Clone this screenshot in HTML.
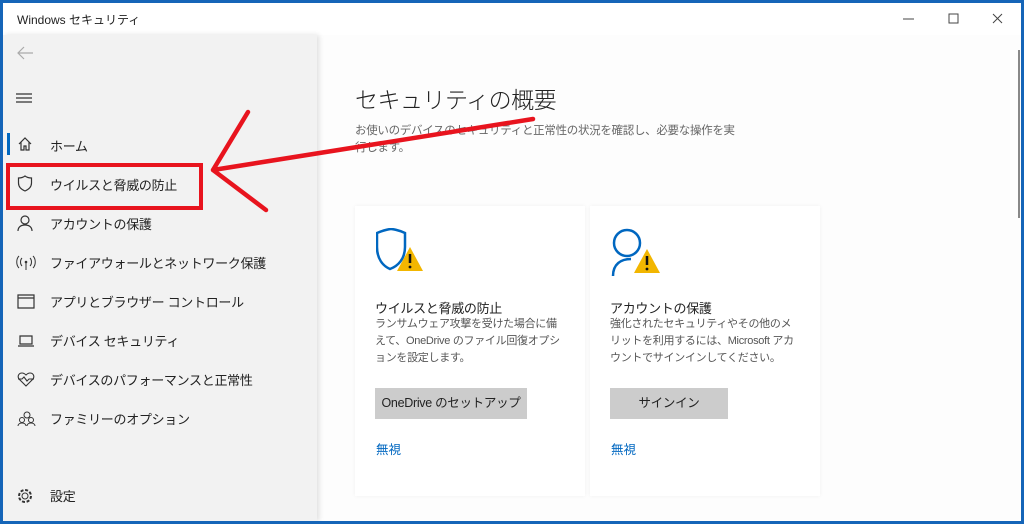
<!DOCTYPE html>
<html><head><meta charset="utf-8"><style>
*{margin:0;padding:0;box-sizing:border-box}
body{width:1024px;height:524px;overflow:hidden;background:#1565b8;font-family:"Liberation Sans","Noto Sans CJK JP",sans-serif;position:relative}
.win{position:absolute;left:3px;top:3px;width:1018px;height:518px;background:#fdfdfd;overflow:hidden}
.title{position:absolute;left:0;top:0;width:100%;height:32px;background:#fff;font-size:12px;color:#222}
.title span{position:absolute;left:14px;top:8px}
.side{position:absolute;left:0;top:32px;width:314px;height:486px;background:#f2f2f2;box-shadow:2px 0 5px rgba(0,0,0,.12)}
.nav{position:absolute;left:47px;font-size:13px;color:#222;letter-spacing:-.3px}
.ic{position:absolute;left:12px}
.t{position:absolute;color:#222}
.card{position:absolute;top:203px;width:230px;height:290px;background:#fff;box-shadow:0 0 4px rgba(0,0,0,.05)}
.ct{position:absolute;left:20px;font-size:13px;color:#222;letter-spacing:-.3px}
.cd{position:absolute;left:20px;top:110px;font-size:11px;line-height:17px;color:#555;width:190px;letter-spacing:-.3px}
.btn{position:absolute;left:20px;top:182px;height:31px;background:#ccc;font-size:12.5px;color:#222;text-align:center;line-height:31px;letter-spacing:-.3px}
.lk{position:absolute;left:21px;top:233px;font-size:12.5px;color:#0067c0}
</style></head><body>
<div class="win">
<div class="title"><span>Windows セキュリティ</span>
<svg style="position:absolute;left:880px;top:6px" width="130" height="20"><path d="M20 10h11" stroke="#444"/><path d="M66 5h9v9h-9z" stroke="#444" fill="none"/><path d="M110 5l9 9M119 5l-9 9" stroke="#444"/></svg></div>
<div class="side">
<svg class="ic" style="top:10px" width="20" height="16"><path d="M18 8H3M9 2L3 8l6 6" stroke="#aaa" fill="none" stroke-width="1.2"/></svg>
<svg class="ic" style="top:58px" width="20" height="12"><path d="M1 1h16M1 5h16M1 9h16" stroke="#333" stroke-width="1.2"/></svg>
<div style="position:absolute;left:4px;top:98px;width:3px;height:22px;background:#0067c0"></div>
<svg class="ic" style="top:101px;left:14px" width="18" height="16"><path d="M2 8L8 2l6 6M4 6v8h3v-4h2v4h3V6" stroke="#333" fill="none" stroke-width="1.2"/></svg>
<div class="nav" style="top:101px">ホーム</div>
<svg class="ic" style="top:140px;left:14px" width="18" height="18"><path d="M8 1C6 2.5 4 3 1.5 3v5c0 4 3 6.5 6.5 8 3.5-1.5 6.5-4 6.5-8V3C12 3 10 2.5 8 1z" stroke="#333" fill="none" stroke-width="1.2"/></svg>
<div class="nav" style="top:140px">ウイルスと脅威の防止</div>
<svg class="ic" style="top:180px;left:14px" width="18" height="18"><circle cx="8" cy="5" r="4" stroke="#333" fill="none" stroke-width="1.2"/><path d="M1 16c0-4 3-6 7-6s7 2 7 6" stroke="#333" fill="none" stroke-width="1.2"/></svg>
<div class="nav" style="top:179px">アカウントの保護</div>
<svg class="ic" style="top:220px;left:13px" width="20" height="16"><circle cx="10" cy="7" r="1.3" fill="#333"/><path d="M10 8v7M6 3c-2 2-2 6 0 8M14 3c2 2 2 6 0 8M3 1c-3 3-3 9 0 12M17 1c3 3 3 9 0 12" stroke="#333" fill="none" stroke-width="1"/></svg>
<div class="nav" style="top:218px">ファイアウォールとネットワーク保護</div>
<svg class="ic" style="top:259px;left:14px" width="20" height="16"><path d="M1 1h16v13H1zM1 4h16" stroke="#333" fill="none" stroke-width="1.2"/></svg>
<div class="nav" style="top:257px">アプリとブラウザー コントロール</div>
<svg class="ic" style="top:299px;left:14px" width="20" height="14"><path d="M3 2h12v8H3zM1 12h16" stroke="#333" fill="none" stroke-width="1.2"/></svg>
<div class="nav" style="top:296px">デバイス セキュリティ</div>
<svg class="ic" style="top:337px;left:14px" width="20" height="16"><path d="M9 14L2 7C0 4 2 1 5 1c2 0 3 1 4 2 1-1 2-2 4-2 3 0 5 3 3 6zM1 7h4l2-2 3 4 2-2h5" stroke="#333" fill="none" stroke-width="1.1"/></svg>
<div class="nav" style="top:335px">デバイスのパフォーマンスと正常性</div>
<svg class="ic" style="top:376px;left:14px" width="20" height="16"><circle cx="10" cy="4" r="3" stroke="#333" fill="none"/><circle cx="5" cy="9" r="2.5" stroke="#333" fill="none"/><circle cx="14" cy="9" r="2.5" stroke="#333" fill="none"/><path d="M1 15c0-2 2-3 4-3s4 1 4 3M10 15c0-2 2-3 4-3s4 1 4 3" stroke="#333" fill="none"/></svg>
<div class="nav" style="top:374px">ファミリーのオプション</div>
<svg class="ic" style="top:453px;left:14px" width="18" height="18"><circle cx="8" cy="8" r="3" stroke="#333" fill="none"/><circle cx="8" cy="8" r="6" stroke="#333" fill="none" stroke-dasharray="3 1.7" stroke-width="2"/></svg>
<div class="nav" style="top:451px">設定</div>
</div>
<div class="t" style="left:352px;top:78px;font-size:23px;font-weight:300;letter-spacing:-.5px">セキュリティの概要</div>
<div class="t" style="left:352px;top:120px;font-size:11.5px;line-height:17px;color:#666;width:380px;letter-spacing:-.3px">お使いのデバイスのセキュリティと正常性の状況を確認し、必要な操作を実行します。</div>
<div class="card" style="left:352px">
<svg style="position:absolute;left:21px;top:22px" width="50" height="50"><path d="M1 5C8 2 14 1 15 1s8 1 14 4v14c0 12-7 19-15 22C7 38 1 31 1 19z" stroke="#0067c0" fill="none" stroke-width="2.5"/><path d="M34 19L21 43h26z" fill="#f2b600"/><path d="M34 26v9" stroke="#111" stroke-width="2.5"/><circle cx="34" cy="39" r="1.4" fill="#111"/></svg>
<div class="ct" style="top:92px">ウイルスと脅威の防止</div>
<div class="cd">ランサムウェア攻撃を受けた場合に備えて、OneDrive のファイル回復オプションを設定します。</div>
<div class="btn" style="width:152px">OneDrive のセットアップ</div>
<div class="lk">無視</div>
</div>
<div class="card" style="left:587px">
<svg style="position:absolute;left:21px;top:22px" width="50" height="50"><circle cx="16" cy="15" r="13" stroke="#0067c0" fill="none" stroke-width="2.5"/><path d="M2 48c0-12 8-17 18-17" stroke="#0067c0" fill="none" stroke-width="2.5"/><path d="M36 21L23 45h26z" fill="#f2b600"/><path d="M36 28v9" stroke="#111" stroke-width="2.5"/><circle cx="36" cy="41" r="1.4" fill="#111"/></svg>
<div class="ct" style="top:92px">アカウントの保護</div>
<div class="cd">強化されたセキュリティやその他のメリットを利用するには、Microsoft アカウントでサインインしてください。</div>
<div class="btn" style="width:118px">サインイン</div>
<div class="lk">無視</div>
</div>
<div style="position:absolute;left:1015px;top:47px;width:2px;height:168px;background:#888"></div>
</div>
<svg style="position:absolute;left:0;top:0" width="1024" height="524"><rect x="8" y="165" width="193" height="43" stroke="#e8141e" stroke-width="4" fill="none"/><path d="M533 119L213 170M213 170L248 112M213 170L266 210" stroke="#e8141e" stroke-width="4.5" fill="none" stroke-linecap="round"/></svg>
</body></html>
